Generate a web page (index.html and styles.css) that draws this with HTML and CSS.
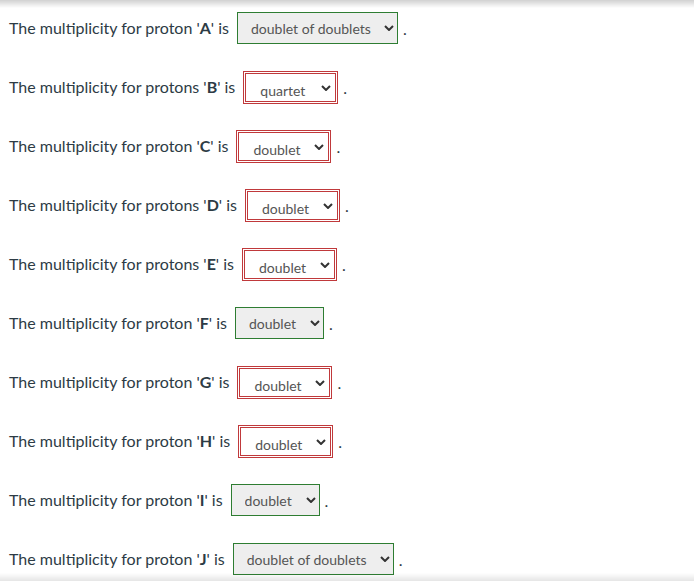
FILE: index.html
```html
<!DOCTYPE html>
<html lang="en">
<head>
  <meta charset="UTF-8" />
  <title>Multiplicity</title>
  <link rel="stylesheet" href="styles.css">
</head>
<body>
  <div class="quiz">
    <div class="q-row">
      <span class="q-text">The multiplicity for proton '<b>A</b>' is</span>
      <span class="q-ans ok"><span class="q-box"><select class="q-select wide" tabindex="-1"><option>doublet of doublets</option></select><svg class="chev" viewBox="0 0 10 6"><path d="M1 1 L5 5 L9 1"/></svg></span></span>
      <span class="q-dot">.</span>
    </div>
    <div class="q-row">
      <span class="q-text">The multiplicity for protons '<b>B</b>' is</span>
      <span class="q-ans bad"><span class="q-box"><select class="q-select" tabindex="-1"><option>quartet</option></select><svg class="chev" viewBox="0 0 10 6"><path d="M1 1 L5 5 L9 1"/></svg></span></span>
      <span class="q-dot">.</span>
    </div>
    <div class="q-row">
      <span class="q-text">The multiplicity for proton '<b>C</b>' is</span>
      <span class="q-ans bad"><span class="q-box"><select class="q-select" tabindex="-1"><option>doublet</option></select><svg class="chev" viewBox="0 0 10 6"><path d="M1 1 L5 5 L9 1"/></svg></span></span>
      <span class="q-dot">.</span>
    </div>
    <div class="q-row">
      <span class="q-text">The multiplicity for protons '<b>D</b>' is</span>
      <span class="q-ans bad"><span class="q-box"><select class="q-select" tabindex="-1"><option>doublet</option></select><svg class="chev" viewBox="0 0 10 6"><path d="M1 1 L5 5 L9 1"/></svg></span></span>
      <span class="q-dot">.</span>
    </div>
    <div class="q-row">
      <span class="q-text">The multiplicity for protons '<b>E</b>' is</span>
      <span class="q-ans bad"><span class="q-box"><select class="q-select" tabindex="-1"><option>doublet</option></select><svg class="chev" viewBox="0 0 10 6"><path d="M1 1 L5 5 L9 1"/></svg></span></span>
      <span class="q-dot">.</span>
    </div>
    <div class="q-row">
      <span class="q-text">The multiplicity for proton '<b>F</b>' is</span>
      <span class="q-ans ok"><span class="q-box"><select class="q-select" tabindex="-1"><option>doublet</option></select><svg class="chev" viewBox="0 0 10 6"><path d="M1 1 L5 5 L9 1"/></svg></span></span>
      <span class="q-dot">.</span>
    </div>
    <div class="q-row">
      <span class="q-text">The multiplicity for proton '<b>G</b>' is</span>
      <span class="q-ans bad"><span class="q-box"><select class="q-select" tabindex="-1"><option>doublet</option></select><svg class="chev" viewBox="0 0 10 6"><path d="M1 1 L5 5 L9 1"/></svg></span></span>
      <span class="q-dot">.</span>
    </div>
    <div class="q-row">
      <span class="q-text">The multiplicity for proton '<b>H</b>' is</span>
      <span class="q-ans bad"><span class="q-box"><select class="q-select" tabindex="-1"><option>doublet</option></select><svg class="chev" viewBox="0 0 10 6"><path d="M1 1 L5 5 L9 1"/></svg></span></span>
      <span class="q-dot">.</span>
    </div>
    <div class="q-row">
      <span class="q-text">The multiplicity for proton '<b>I</b>' is</span>
      <span class="q-ans ok"><span class="q-box"><select class="q-select" tabindex="-1"><option>doublet</option></select><svg class="chev" viewBox="0 0 10 6"><path d="M1 1 L5 5 L9 1"/></svg></span></span>
      <span class="q-dot">.</span>
    </div>
    <div class="q-row">
      <span class="q-text">The multiplicity for proton '<b>J</b>' is</span>
      <span class="q-ans ok"><span class="q-box"><select class="q-select wide" tabindex="-1"><option>doublet of doublets</option></select><svg class="chev" viewBox="0 0 10 6"><path d="M1 1 L5 5 L9 1"/></svg></span></span>
      <span class="q-dot">.</span>
    </div>
  </div>
</body>
</html>
```

FILE: styles.css
```css
body {
  margin: 0;
  background: #fff;
  font-family: Lato, "Open Sans", sans-serif;
  color: #2d3b45;
}
body::before,
body::after {
  content: "";
  position: fixed;
  left: 0;
  right: 0;
  height: 8px;
  pointer-events: none;
}
body::before {
  top: 0;
  background: linear-gradient(to bottom, rgba(0,0,0,0.18), rgba(0,0,0,0));
}
body::after {
  bottom: 0;
  background: linear-gradient(to top, rgba(0,0,0,0.10), rgba(0,0,0,0));
}

.quiz {
  padding: 12px 9px 0;
  display: flex;
  flex-direction: column;
  gap: 27px;
}
.q-row {
  display: flex;
  align-items: center;
  height: 32px;
  font-size: 16px;
}
.q-text {
  flex: none;
  margin-top: -1px;
  white-space: nowrap;
}
.q-text b {
  font-weight: 700;
}
.q-ans {
  flex: none;
  display: inline-flex;
  margin-left: 8px;
}
.q-box {
  position: relative;
  display: inline-flex;
}
.q-dot {
  margin-left: 5px;
}

.q-select {
  -webkit-appearance: none;
  appearance: none;
  font-family: Lato, "Open Sans", sans-serif;
  font-size: 14px;
  color: #555;
  width: 87px;
  height: 30px;
  padding: 0 16px 0 13px;
  border: none;
  border-radius: 0;
  background: transparent;
  outline: none !important;
}
.q-select.wide {
  width: 159px;
}
.chev {
  position: absolute;
  right: 3px;
  top: 50%;
  width: 10px;
  height: 6px;
  margin-top: -3px;
  pointer-events: none;
}
.chev path {
  fill: none;
  stroke: #333;
  stroke-width: 2;
}

/* correct answers */
.q-ans.ok .q-box {
  border: 1px solid #2e7d32;
  background: #eeeeee;
}

/* wrong answers */
.q-ans.bad {
  align-self: flex-start;
  border: 1px solid #c0393b;
  padding: 1px;
  background: #fff;
}
.q-ans.bad .q-box {
  border: 1px solid #c0393b;
  background: #fff;
}
.q-ans.bad .q-select {
  width: 89px;
  height: 27px;
  padding-top: 6px;
  padding-left: 14px;
}
.q-ans.bad .chev {
  right: 4px;
}
```
